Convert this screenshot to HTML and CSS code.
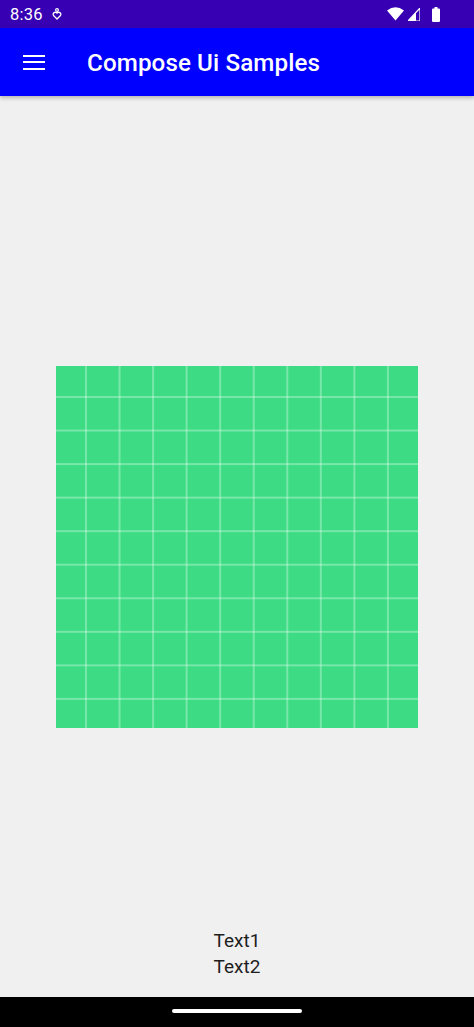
FILE: index.html
```html
<!DOCTYPE html>
<html lang="en">
<head>
    <meta charset="UTF-8">
    <meta name="viewport" content="width=device-width, initial-scale=1.0">
    <title>Compose Ui Samples</title>
    <link rel="stylesheet" href="styles.css">
</head>
<body>
    <div class="status-bar">
        <div class="status-left">
            <span class="clock">8:36</span>
            <svg class="notif" width="10" height="12" viewBox="0 0 10 12">
                <circle cx="5" cy="2" r="1.4" fill="none" stroke="#fff" stroke-width="1.2"/>
                <path d="M5 11 L1.5 7.5 A2 2 0 0 1 5 5.2 A2 2 0 0 1 8.5 7.5 Z" fill="none" stroke="#fff" stroke-width="1.3" stroke-linejoin="round"/>
            </svg>
        </div>
        <div class="status-right">
            <svg width="17" height="14" viewBox="0 0 17 14">
                <path d="M0 3.5 Q8.5 -3 17 3.5 L8.5 13.5 Z" fill="#fff"/>
            </svg>
            <svg width="12" height="13" viewBox="0 0 12 13">
                <path d="M12 0 L12 13 L0 13 Z" fill="none" stroke="#fff" stroke-width="1.2"/>
                <path d="M8 4.5 L8 13 L0.5 13 Z" fill="#fff"/>
            </svg>
            <svg class="battery" width="8" height="15" viewBox="0 0 8 15">
                <rect x="2.5" y="0" width="3" height="2" fill="#fff"/>
                <rect x="0" y="1.5" width="8" height="13.5" rx="1" fill="#fff"/>
            </svg>
        </div>
    </div>

    <header class="app-bar">
        <div class="menu-icon">
            <span></span><span></span><span></span>
        </div>
        <h1 class="title">Compose Ui Samples</h1>
    </header>

    <main class="content">
        <div class="grid-box"></div>
        <div class="texts">
            <div>Text1</div>
            <div>Text2</div>
        </div>
    </main>

    <div class="nav-bar">
        <div class="pill"></div>
    </div>
</body>
</html>
```

FILE: styles.css
```css
body {
    margin: 0;
    width: 474px;
    height: 1027px;
    display: flex;
    flex-direction: column;
    background: #f0f0f0;
    font-family: Roboto, "Liberation Sans", sans-serif;
    overflow: hidden;
}
.status-bar {
    height: 28px;
    flex-shrink: 0;
    background: #3700b3;
    color: #ffffff;
    display: flex;
    justify-content: space-between;
    align-items: center;
    padding: 0 34px 0 10px;
}
.status-left {
    display: flex;
    align-items: center;
    gap: 9px;
}
.clock {
    font-size: 16.5px;
    letter-spacing: 0.2px;
}
.status-right {
    display: flex;
    align-items: center;
    gap: 4px;
}
.status-right .battery {
    margin-left: 8px;
}
.app-bar {
    height: 68px;
    flex-shrink: 0;
    background: #0000ff;
    display: flex;
    align-items: center;
    box-shadow: 0 2px 4px rgba(0, 0, 0, 0.25);
    position: relative;
    z-index: 1;
}
.menu-icon {
    width: 22px;
    margin-left: 23px;
    display: flex;
    flex-direction: column;
    gap: 4.5px;
}
.menu-icon span {
    display: block;
    height: 2px;
    background: #ffffff;
}
.title {
    margin: 2px 0 0 42px;
    color: #ffffff;
    font-size: 24.2px;
    font-weight: 500;
    letter-spacing: 0.1px;
}
.content {
    flex: 1;
    display: grid;
    place-items: center;
}
.grid-box {
    grid-area: 1 / 1;
    width: 362px;
    height: 362px;
    background-color: #3ddc84;
    background-image:
        linear-gradient(to right, rgba(255, 255, 255, 0.3) 2px, transparent 2px),
        linear-gradient(to bottom, rgba(255, 255, 255, 0.3) 2px, transparent 2px);
    background-size: 33.55px 100%, 100% 33.55px;
    background-position: 29px 0, 0 30px;
}
.texts {
    grid-area: 1 / 1;
    align-self: end;
    text-align: center;
    font-size: 19px;
    line-height: 26px;
    color: #1e1e1e;
    padding-bottom: 17px;
}
.nav-bar {
    height: 30px;
    flex-shrink: 0;
    background: #000000;
    display: flex;
    justify-content: center;
    align-items: center;
}
.pill {
    width: 130px;
    height: 4px;
    border-radius: 2px;
    background: #ffffff;
    margin-top: -2px;
}
```
